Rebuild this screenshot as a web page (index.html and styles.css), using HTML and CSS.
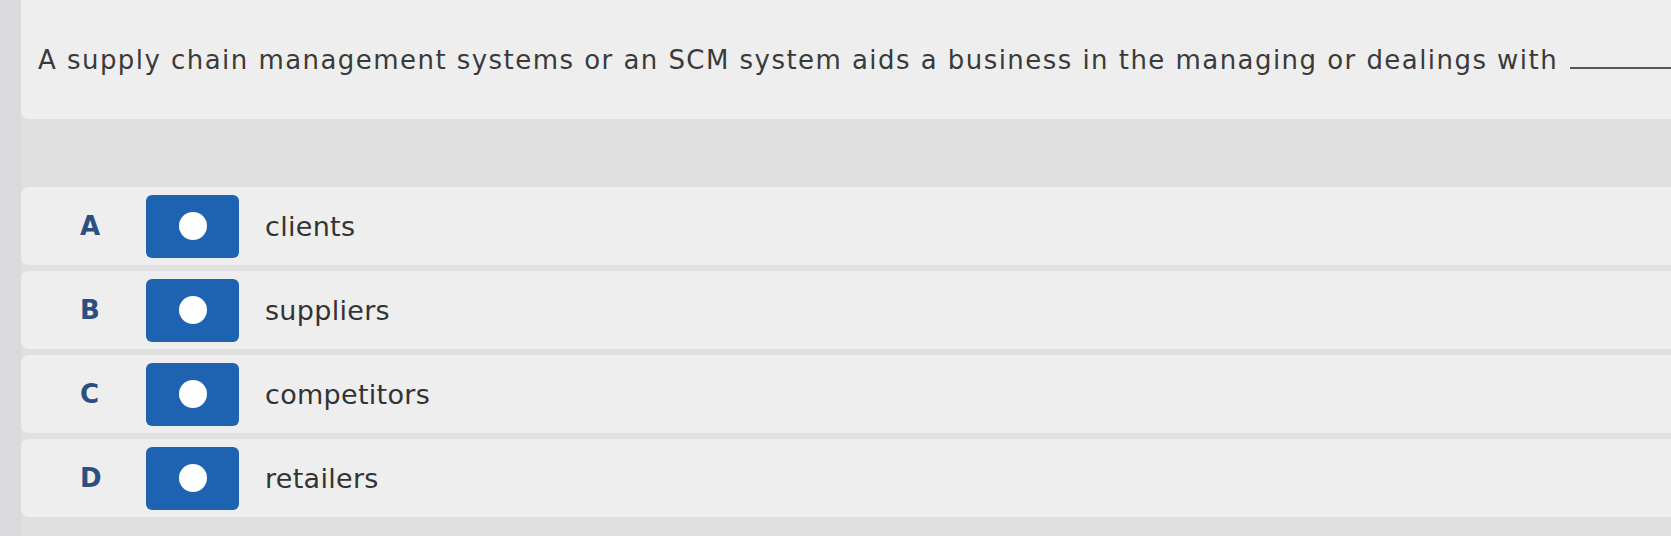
FILE: index.html
```html
<!DOCTYPE html>
<html lang="en">
<head>
    <meta charset="UTF-8">
    <title>Question</title>
    <link rel="stylesheet" href="styles.css">
</head>
<body>
    <div class="page">
        <div class="question">
            A supply chain management systems or an SCM system aids a business in the managing or dealings with <span class="blank"></span>
        </div>
        <div class="options">
            <div class="option">
                <span class="letter">A</span>
                <span class="radio"><span class="dot"></span></span>
                <span class="label">clients</span>
            </div>
            <div class="option">
                <span class="letter">B</span>
                <span class="radio"><span class="dot"></span></span>
                <span class="label">suppliers</span>
            </div>
            <div class="option">
                <span class="letter">C</span>
                <span class="radio"><span class="dot"></span></span>
                <span class="label">competitors</span>
            </div>
            <div class="option">
                <span class="letter">D</span>
                <span class="radio"><span class="dot"></span></span>
                <span class="label">retailers</span>
            </div>
        </div>
    </div>
</body>
</html>
```

FILE: styles.css
```css
body {
    margin: 0;
    background-color: #dadadc;
    font-family: "DejaVu Sans", Verdana, sans-serif;
    overflow: hidden;
}

.page {
    margin-left: 21px;
    background-color: #e0e0e0;
    height: 536px;
}

.question {
    height: 119px;
    box-sizing: border-box;
    padding: 45px 0 0 17px;
    background-color: #eeeeee;
    border-radius: 0 0 0 8px;
    font-size: 26px;
    letter-spacing: 1.45px;
    line-height: 30px;
    color: #3a3a3a;
    white-space: nowrap;
    overflow: hidden;
}

.blank {
    display: inline-block;
    width: 200px;
    border-bottom: 2px solid #555;
    margin-left: 2px;
}

.options {
    display: flex;
    flex-direction: column;
    gap: 6px;
    padding-top: 68px;
    background-color: #e0e0e0;
}

.option {
    display: flex;
    align-items: center;
    height: 78px;
    background-color: #eeeeee;
    border-radius: 8px 0 0 8px;
}

.letter {
    width: 125px;
    box-sizing: border-box;
    padding-left: 59px;
    font-size: 26px;
    font-weight: bold;
    color: #2b4f82;
}

.radio {
    display: flex;
    justify-content: center;
    align-items: center;
    width: 93px;
    height: 63px;
    border-radius: 6px;
    background-color: #1e63b2;
}

.dot {
    width: 28px;
    height: 28px;
    border-radius: 50%;
    background-color: #ffffff;
}

.label {
    margin-left: 26px;
    font-size: 27px;
    letter-spacing: 0.3px;
    color: #333333;
}
```
